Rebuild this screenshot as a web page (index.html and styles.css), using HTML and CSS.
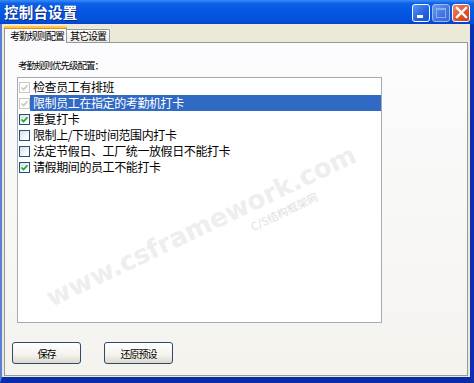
FILE: index.html
```html
<!DOCTYPE html>
<html lang="zh-CN">
	<head>
		<meta charset="utf-8">
		<title>控制台设置</title>
		<link rel="stylesheet" href="styles.css">
	</head>
	<body>
		<div class="window">
			<div class="titlebar">
				<span class="title">控制台设置</span>
				<div class="controls">
					<span class="ctl min"><i></i></span>
					<span class="ctl max disabled"><i></i></span>
					<span class="ctl close">
						<svg width="13" height="13" viewBox="0 0 13 13"><path d="M2 2 L11 11 M11 2 L2 11" stroke="#fff" stroke-width="2.4" stroke-linecap="square"/></svg>
					</span>
				</div>
			</div>
			<div class="client">
				<div class="tabstrip">
					<div class="tab active">考勤规则配置</div>
					<div class="tab">其它设置</div>
				</div>
				<div class="tabpanel">
					<div class="caption">考勤规则优先级配置：</div>
					<div class="checklist">
						<div class="row">
							<span class="box disabled"><svg viewBox="0 0 9 9"><path d="M1.5 4.5 L3.6 6.6 L7.5 2.2" /></svg></span>
							<span class="text">检查员工有排班</span>
						</div>
						<div class="row">
							<span class="box disabled"><svg viewBox="0 0 9 9"><path d="M1.5 4.5 L3.6 6.6 L7.5 2.2" /></svg></span>
							<span class="text selected">限制员工在指定的考勤机打卡</span>
						</div>
						<div class="row">
							<span class="box checked"><svg viewBox="0 0 9 9"><path d="M1.5 4.5 L3.6 6.6 L7.5 2.2" /></svg></span>
							<span class="text">重复打卡</span>
						</div>
						<div class="row">
							<span class="box"></span>
							<span class="text">限制上/下班时间范围内打卡</span>
						</div>
						<div class="row">
							<span class="box"></span>
							<span class="text">法定节假日、工厂统一放假日不能打卡</span>
						</div>
						<div class="row">
							<span class="box checked"><svg viewBox="0 0 9 9"><path d="M1.5 4.5 L3.6 6.6 L7.5 2.2" /></svg></span>
							<span class="text">请假期间的员工不能打卡</span>
						</div>
						<div class="watermark">www.csframework.com</div>
						<div class="watermark-sub">C/S结构框架网</div>
					</div>
					<div class="buttons">
						<button class="btn">保存</button>
						<button class="btn">还原预设</button>
					</div>
				</div>
			</div>
		</div>
	</body>
</html>
```

FILE: styles.css
```css
html, body {
	margin: 0;
	padding: 0;
	overflow: hidden;
}

body {
	width: 474px;
	height: 383px;
	font-family: "Noto Sans CJK SC", "Noto Sans", sans-serif;
	background: #0a2ca8;
}

.window {
	display: flex;
	flex-direction: column;
	width: 474px;
	height: 383px;
}

/* title bar */
.titlebar {
	height: 24px;
	flex: none;
	display: flex;
	align-items: center;
	justify-content: space-between;
	padding: 0 4px 0 4px;
	background: linear-gradient(#3d8df7 0%, #0b62e8 14%, #0556e2 45%, #0553dd 80%, #0343cc 100%);
}

.title {
	color: #fff;
	font-size: 14.5px;
	font-weight: bold;
	letter-spacing: 0.2px;
	line-height: 24px;
	text-shadow: 1px 1px 0 #0b2a86;
}

.controls {
	display: flex;
	gap: 2px;
	padding-top: 1px;
}

.ctl {
	width: 18px;
	height: 18px;
	box-sizing: border-box;
	border: 1px solid #fff;
	border-radius: 3px;
	background: linear-gradient(135deg, #5c95f8, #2460e0 60%, #1d52d0);
	display: flex;
	align-items: center;
	justify-content: center;
	position: relative;
}

.ctl.min i {
	position: absolute;
	left: 4px;
	bottom: 3px;
	width: 6px;
	height: 3px;
	background: #fff;
}

.ctl.max {
	border-color: #9fb8ee;
	background: linear-gradient(135deg, #6b9cf2, #3f74e4 60%, #3667d8);
}

.ctl.max i {
	width: 8px;
	height: 7px;
	border: 1px solid #8cabea;
	border-top-width: 2px;
}

.ctl.close {
	background: linear-gradient(135deg, #f08a66, #e0532e 55%, #c83c18);
}

/* client area */
.client {
	flex: 1;
	display: flex;
	flex-direction: column;
	background: #ece9d8;
	border-left: 2px solid #5a7fd6;
	border-right: 4px solid #0a2eb4;
	border-bottom: 6px solid #0a2ca8;
	padding: 2px 2px 1px 2px;
}

.tabstrip {
	display: flex;
	align-items: flex-end;
	height: 16px;
	flex: none;
}

.tab {
	box-sizing: border-box;
	height: 13px;
	padding: 0 3px 0 3px;
	border: 1px solid #919b9c;
	border-left: none;
	border-bottom: none;
	border-radius: 0 2px 0 0;
	background: linear-gradient(#ffffff, #ecebe6);
	font-size: 10px;
	letter-spacing: -1px;
	line-height: 12px;
	white-space: nowrap;
	color: #000;
}

.tab.active {
	height: 17px;
	margin-bottom: -1px;
	position: relative;
	z-index: 1;
	width: 63px;
	padding: 0 0 0 5px;
	border-left: 1px solid #919b9c;
	border-radius: 2px 2px 0 0;
	border-top: 2px solid #ffc83c;
	background: #fcfcfe;
	line-height: 15px;
	box-shadow: inset 0 1px 0 #e68b2c;
}

.tabpanel {
	flex: 1;
	border: 1px solid #919b9c;
	background: linear-gradient(#fcfcfe, #f4f3ee);
	display: flex;
	flex-direction: column;
	padding: 15px 0 0 7px;
}

.caption {
	margin-left: 6px;
	font-size: 9.5px;
	letter-spacing: -1px;
	line-height: 14px;
	color: #000;
}

/* checked list box */
.checklist {
	position: relative;
	overflow: hidden;
	margin: 5px 0 0 5px;
	width: 365px;
	height: 246px;
	box-sizing: border-box;
	border: 1px solid #a5acb2;
	background: #fff;
	padding-top: 1px;
}

.row {
	display: flex;
	align-items: center;
	height: 16px;
	position: relative;
	z-index: 1;
}

.box {
	width: 11px;
	height: 11px;
	box-sizing: border-box;
	margin-left: 1px;
	border: 1px solid #1c5180;
	background: linear-gradient(135deg, #dcdcd7, #ffffff 80%);
	display: flex;
	align-items: center;
	justify-content: center;
}

.box svg {
	width: 9px;
	height: 9px;
	fill: none;
	stroke-width: 1.7;
}

.box.checked svg path {
	stroke: #21a121;
}

.box.disabled {
	border-color: #cac8bb;
	background: #fff;
}

.box.disabled svg path {
	stroke: #c8c8c0;
}

.text {
	flex: 1;
	height: 16px;
	padding-left: 3px;
	font-size: 12px;
	letter-spacing: -0.4px;
	line-height: 16px;
	color: #000;
}

.text.selected {
	background: #316ac5;
	color: #fff;
}

.watermark {
	position: absolute;
	left: 0;
	top: 133px;
	width: 366px;
	text-align: center;
	font-family: "DejaVu Sans", sans-serif;
	font-weight: bold;
	font-size: 26px;
	line-height: 30px;
	color: #eeeeee;
	transform: rotate(-25.5deg);
	transform-origin: 183px 15px;
	pointer-events: none;
}

.watermark-sub {
	position: absolute;
	left: 216px;
	top: 126px;
	width: 100px;
	text-align: center;
	font-size: 11px;
	line-height: 14px;
	color: #e0e0e0;
	transform: rotate(-25.5deg);
	pointer-events: none;
}

/* buttons */
.buttons {
	display: flex;
	gap: 23px;
	margin-top: 19px;
}

.btn {
	width: 69px;
	height: 22px;
	padding: 0;
	border: 1px solid #2f4b6a;
	border-radius: 3px;
	background: linear-gradient(#ffffff, #f3f2ed 60%, #dcd8cc);
	font-family: "Noto Sans CJK SC", sans-serif;
	font-size: 10px;
	letter-spacing: -1px;
	color: #000;
}
```
